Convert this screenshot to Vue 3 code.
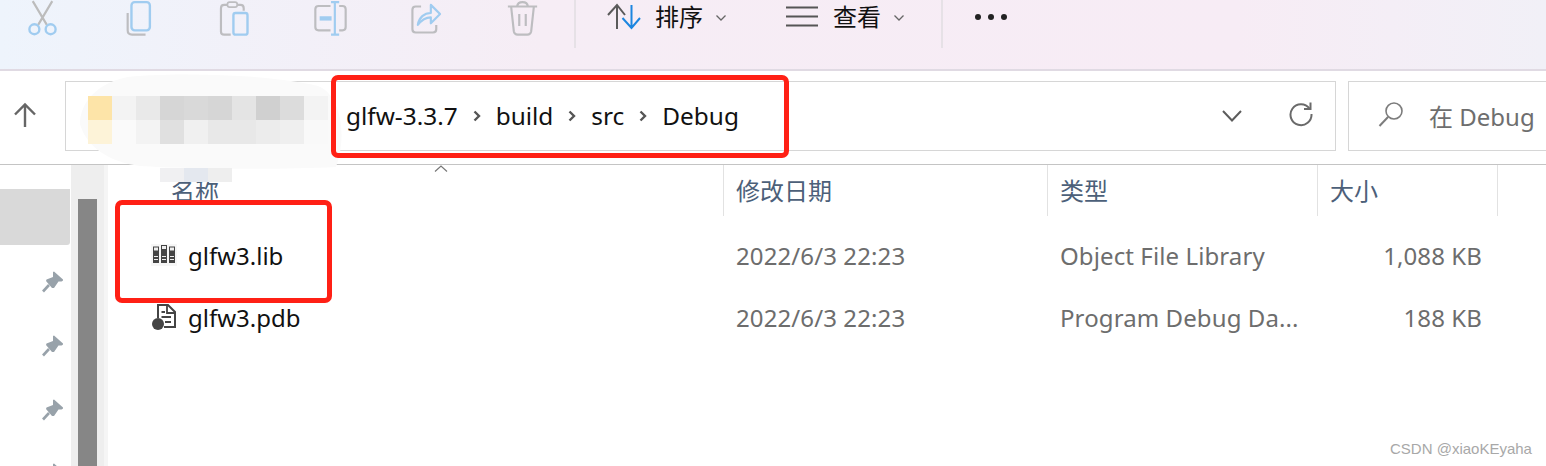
<template>
  <div class="window">
    <div class="toolbar">
      <button class="tool first" title="剪切">
        <svg width="39" height="39" viewBox="21 0 36 36" fill="none">
          <path d="M30 1L43 23M48 1L35 23" stroke="#bcbcbc" stroke-width="2" />
          <circle cx="31.5" cy="27" r="4.6" stroke="#a0ccf0" stroke-width="2.2" />
          <circle cx="46.5" cy="27" r="4.6" stroke="#a0ccf0" stroke-width="2.2" />
        </svg>
      </button>
      <button class="tool" title="复制">
        <svg width="39" height="39" viewBox="110.5 0 36 36" fill="none">
          <path d="M118.5 12V28Q118.5 32 122.5 32H135" stroke="#bdbdc0" stroke-width="2" />
          <rect x="122" y="2" width="17" height="26" rx="3" stroke="#a0ccf0" stroke-width="2.2" />
        </svg>
      </button>
      <button class="tool" title="粘贴">
        <svg width="39" height="39" viewBox="200.5 0 36 36" fill="none">
          <path d="M212 4.500H209Q206 4.500 206 7.500V29Q206 32 209 32H215M221 4.500H224Q227 4.500 227 7.500V10" stroke="#bdbdc0" stroke-width="2" />
          <rect x="212" y="2" width="9" height="4.500" rx="2" stroke="#bdbdc0" stroke-width="1.600" />
          <rect x="217.500" y="12" width="13" height="20" rx="2" stroke="#a0ccf0" stroke-width="2.200" />
        </svg>
      </button>
      <button class="tool" title="重命名">
        <svg width="39" height="39" viewBox="290 0 36 36" fill="none">
          <path d="M308 5.500H297Q294 5.500 294 8.500V25Q294 28 297 28H308M316 5.500H319Q322 5.500 322 8.500V25Q322 28 319 28H316" stroke="#bdbdc0" stroke-width="2" />
          <path d="M298 17H309" stroke="#a0ccf0" stroke-width="4" />
          <path d="M312 2V32M308.500 2H316M308.500 32H316" stroke="#a0ccf0" stroke-width="2" />
        </svg>
      </button>
      <button class="tool" title="共享">
        <svg width="39" height="39" viewBox="381 0 36 36" fill="none">
          <path d="M394 6H389Q386 6 386 9V27Q386 30 389 30H405Q408 30 408 27V23" stroke="#bdbdc0" stroke-width="2" />
          <path d="M391 23C392 16 397 12 403 12V4.500L411.500 13L403 21.500V16C398 16 394 19 391 23Z" stroke="#a0ccf0" stroke-width="2" stroke-linejoin="round" />
        </svg>
      </button>
      <button class="tool" title="删除">
        <svg width="39" height="39" viewBox="469.500 0 36 36" fill="none" stroke="#bdbdc0" stroke-width="2">
          <path d="M474 6H501M482.500 6Q483 2 487.500 2Q492 2 492.500 6M477 6L479.500 29Q480 32 483 32H492Q495 32 495.500 29L498 6" />
          <path d="M484.500 13V24M490.500 13V24" />
        </svg>
      </button>

      <div class="divider sep-a"></div>

      <button class="tool-text sort">
        <svg width="34" height="34" viewBox="607 0 34 34" fill="none" stroke-width="2">
          <path d="M608 15L617 5L625 15M617 5V29" stroke="#5a5a5a" />
          <path d="M622.500 18L631.500 28L640 18M631.500 5V28" stroke="#1c86e0" />
        </svg>
        <span class="tool-label">排序</span>
        <svg class="caret" width="10" height="6" viewBox="0 0 10 6" fill="none">
          <path d="M.5.500L5 5L9.500.500" stroke="#666" stroke-width="1.300" />
        </svg>
      </button>
      <button class="tool-text view">
        <svg width="34" height="34" viewBox="785 0 34 34" fill="none" stroke="#555" stroke-width="2">
          <path d="M786 7.500H818M786 16.500H818M786 25.500H818" />
        </svg>
        <span class="tool-label">查看</span>
        <svg class="caret" width="10" height="6" viewBox="0 0 10 6" fill="none">
          <path d="M.5.500L5 5L9.500.500" stroke="#666" stroke-width="1.300" />
        </svg>
      </button>

      <div class="divider sep-b"></div>

      <svg class="more" width="34" height="8" viewBox="0 0 34 8" fill="#222">
        <circle cx="4" cy="4" r="3" />
        <circle cx="17" cy="4" r="3" />
        <circle cx="30" cy="4" r="3" />
      </svg>
    </div>

    <div class="addressbar">
      <div class="up">
        <svg width="26" height="28" viewBox="0 0 26 28" fill="none" stroke="#666" stroke-width="2.400">
          <path d="M3 12.500L13 2.500L23 12.500M13 2.500V25" />
        </svg>
      </div>
      <div class="address">
        <div class="crumbs">
          <template v-for="(c, i) in crumbs" :key="c">
            <svg v-if="i > 0" class="crumb-sep" width="8" height="12" viewBox="0 0 8 12" fill="none">
              <path d="M1.500 1.500L6 6L1.500 10.500" stroke="#555" stroke-width="2.400" />
            </svg>
            <span class="crumb">{{ c }}</span>
          </template>
        </div>
        <svg class="addr-down" width="20" height="12" viewBox="0 0 20 12" fill="none">
          <path d="M1 1L10 10.500L19 1" stroke="#5c5c5c" stroke-width="2" />
        </svg>
        <svg class="refresh" width="26" height="26" viewBox="0 0 26 26" fill="none" stroke="#6a6a6a" stroke-width="2">
          <path d="M21.500 7.500A10.500 10.500 0 1 0 23.500 13" />
          <path d="M22.500 1.500V8H16" />
        </svg>
      </div>
      <div class="search">
        <svg width="28" height="28" viewBox="0 0 28 28" fill="none" stroke="#7c7c7c">
          <circle cx="17" cy="10" r="8" stroke-width="1.600" />
          <path d="M11 16L2.500 25" stroke-width="2" />
        </svg>
        <span class="search-text">在 Debug</span>
        <span class="search-rest">中搜索</span>
      </div>
    </div>

    <div class="body">
      <div class="sidebar">
        <div class="nav">
          <div class="nav-active"></div>
          <div v-for="n in 4" :key="n" class="nav-pin">
            <svg width="22" height="22" viewBox="0 0 22 22" fill="#98a2aa">
              <path d="M12 .5L21 8.500Q21.500 10 19.500 10.500H16.500L12 17H10L4 10L4.500 8.500L11 6V1Z" />
              <path d="M7 14L1 20.500" stroke="#98a2aa" stroke-width="2.600" />
            </svg>
          </div>
        </div>
        <div class="track"><div class="thumb"></div></div>
      </div>

      <div class="list">
        <div class="head">
          <div class="head-cell name-head">名称
            <svg class="sort-caret" width="14" height="7" viewBox="0 0 14 7" fill="none">
              <path d="M1 6.500L7 1L13 6.500" stroke="#777" stroke-width="1.200" />
            </svg>
          </div>
          <div class="head-cell">修改日期</div>
          <div class="head-cell">类型</div>
          <div class="head-cell">大小</div>
        </div>

        <div v-for="f in files" :key="f.name" class="row">
          <div class="file-name">
            <span class="file-icon">
              <svg v-if="f.icon === 'lib'" width="26" height="22" viewBox="0 0 26 22">
                <rect width="26" height="22" fill="#f6f6f6" />
                <path fill="#444" d="M2 2.500H8V19H2ZM10 1H16V19H10ZM18 2.500H24V19H18Z" />
                <path fill="#eee" d="M3 3.500H7V6.500H3ZM11 2H15V5H11ZM19 3.500H23V6.500H19ZM3 12H7V13H3ZM3 15H7V16H3ZM11 12H15V13H11ZM11 15H15V16H11ZM19 12H23V13H19ZM19 15H23V16H19Z" />
              </svg>
              <svg v-else width="26" height="28" viewBox="0 0 26 28" fill="none">
                <path d="M7 15V2H17L24 9V24H13" stroke="#444" stroke-width="2" />
                <path d="M16 2V10H24M10.500 9H14M10.500 14H20M14 19H20" stroke="#444" stroke-width="1.800" />
                <circle cx="7" cy="21" r="6" fill="#444" />
              </svg>
            </span>
            <span>{{ f.name }}</span>
          </div>
          <div class="cell">{{ f.date }}</div>
          <div class="cell">{{ f.type }}</div>
          <div class="cell size">{{ f.size }}</div>
        </div>
      </div>
    </div>

    <!-- 打码和红框是盖在截图上的标注 -->
    <svg class="smudge" width="270" height="96" viewBox="0 0 270 96">
      <path d="M2 50C2 25 25 4 60 2C120 -2 200 2 240 12C262 20 270 60 258 93C200 96 110 95 62 92C30 88 8 72 2 50Z" fill="#fafafa" />
    </svg>
    <div class="mosaic">
      <div v-for="(t, i) in tiles" :key="i" class="tile" :style="{ background: t }"></div>
    </div>
    <div class="mosaic-low">
      <div v-for="t in lowTiles" :key="t" class="tile-low" :style="{ background: t }"></div>
    </div>
    <div class="mark mark-path"></div>
    <div class="mark mark-file"></div>
    <div class="watermark">CSDN @xiaoKEyaha</div>
  </div>
</template>

<script setup>
const crumbs = ['glfw-3.3.7', 'build', 'src', 'Debug']

const files = [
  { name: 'glfw3.lib', icon: 'lib', date: '2022/6/3 22:23', type: 'Object File Library', size: '1,088 KB' },
  { name: 'glfw3.pdb', icon: 'pdb', date: '2022/6/3 22:23', type: 'Program Debug Da...', size: '188 KB' }
]

const tiles = [
  '#fde4a8', '#f3f3f3', '#e9e9e9', '#d6d6d6', '#d9d9d9', '#d6d6d6', '#e4e4e4', '#d0d0d0', '#dcdcdc', '#f3f3f3',
  '#fdf3d8', '#fafafa', '#f3f3f3', '#e0e0e0', '#f0f0f0', '#e8e8e8', '#e8e8e8', '#ececec', '#efefef', '#f9f9f9'
]
const lowTiles = ['#f0f0f2', '#e4e8ef', '#eeeeee']
</script>

<style>
html, body {
  margin: 0;
  background: #fff;
}
</style>

<style scoped>
.window {
  position: relative;
  width: 1546px;
  height: 466px;
  overflow: hidden;
  background: #fff;
  font-family: "Noto Sans", "Noto Sans CJK SC", sans-serif;
  color: #111;
}

button {
  padding: 0;
  border: 0;
  background: none;
  font: inherit;
  color: inherit;
}

.toolbar {
  display: flex;
  align-items: flex-start;
  height: 69px;
  border-bottom: 2px solid #e0dae3;
  background: linear-gradient(90deg, #eef4fc 0%, #f6edf5 35%, #f7ecf5 80%, #f1f0f7 100%);
}

.tool {
  flex: none;
  display: flex;
  justify-content: center;
  width: 96px;
  height: 39px;
}

.tool.first {
  width: 84px;
  margin-right: 6px;
}

.divider {
  flex: none;
  width: 2px;
  height: 48px;
  background: #e6e1e6;
}

.sep-a {
  margin-left: 4px;
}

.tool-text {
  flex: none;
  display: flex;
  align-items: flex-start;
  height: 36px;
}

.sort {
  margin-left: 31px;
}

.view {
  margin-left: 59px;
}

.tool-label {
  margin-left: 14px;
  font-size: 24px;
  line-height: 34px;
}

.caret {
  margin: 15px 0 0 13px;
}

.sep-b {
  margin-left: 37px;
}

.more {
  margin: 13px 0 0 31px;
}

.addressbar {
  display: flex;
  height: 93px;
  border-bottom: 1px solid #c4c4c4;
}

.up {
  flex: none;
  width: 65px;
  height: 70px;
  margin-top: 10px;
  display: flex;
  align-items: center;
  padding-left: 12px;
  box-sizing: border-box;
}

.address {
  flex: none;
  display: flex;
  align-items: center;
  box-sizing: border-box;
  width: 1271px;
  height: 70px;
  margin-top: 10px;
  padding-left: 280px;
  border: 1.500px solid #d6d6d6;
}

.crumbs {
  display: flex;
  align-items: center;
  flex: 1;
  font-size: 24.4px;
  margin-top: -1px;
}

.crumb-sep {
  margin: 1px 15px 0;
}

.addr-down {
  margin-right: 46px;
}

.refresh {
  margin-right: 21px;
  margin-top: -4px;
}

.search {
  flex: none;
  display: flex;
  align-items: center;
  box-sizing: border-box;
  width: 400px;
  height: 70px;
  margin: 10px 0 0 12px;
  padding: 0 0 2px 28px;
  border: 1.500px solid #d6d6d6;
  color: #6e6e6e;
  font-size: 24px;
  white-space: nowrap;
}

.search-text {
  margin-left: 24px;
}

.search-rest {
  margin-left: 10px;
}

.body {
  display: flex;
  height: 301px;
}

.sidebar {
  flex: none;
  display: flex;
  width: 108px;
  border-right: 4px solid #f5f5f5;
  box-sizing: border-box;
}

.nav {
  flex: none;
  width: 71px;
  padding-top: 24px;
}

.nav-active {
  width: 70px;
  height: 56px;
  margin-bottom: 5px;
  background: #d9d9d9;
  border-radius: 0 0 3px 0;
}

.nav-pin {
  display: flex;
  justify-content: flex-end;
  align-items: center;
  height: 64px;
  padding-right: 7px;
}

.track {
  flex: none;
  width: 33px;
  padding: 34px 0 0 7px;
  box-sizing: border-box;
  background: #eeeeee;
}

.thumb {
  width: 19px;
  height: 100%;
  background: #868686;
}

.list {
  flex: 1;
}

.head {
  display: grid;
  grid-template-columns: 616px 324px 270px 180px;
  height: 51px;
  margin-bottom: 8px;
}

.head-cell {
  position: relative;
  display: flex;
  align-items: center;
  box-sizing: border-box;
  padding: 0 0 3px 12px;
  border-right: 1.500px solid #e2e2e2;
  color: #4c6079;
  font-size: 24px;
}

.name-head {
  padding-left: 63px;
}

.sort-caret {
  position: absolute;
  left: 326px;
  top: 0;
}

.row {
  display: grid;
  grid-template-columns: 615px 324px 270px 165px;
  align-items: center;
  height: 62px;
  font-size: 24px;
}

.file-name {
  display: flex;
  align-items: center;
  padding-left: 41px;
}

.file-icon {
  display: flex;
  justify-content: center;
  width: 30px;
  margin-right: 9px;
}

.cell {
  padding-left: 13px;
  color: #6d6d6d;
  letter-spacing: 0.1px;
}

.size {
  text-align: right;
}

.smudge {
  position: absolute;
  left: 78px;
  top: 74px;
}

.mosaic {
  position: absolute;
  left: 88px;
  top: 96px;
  display: grid;
  grid-template-columns: repeat(10, 24px);
  grid-auto-rows: 24px;
}

.mosaic-low {
  position: absolute;
  left: 160px;
  top: 168px;
  display: flex;
}

.tile-low {
  width: 24px;
  height: 14px;
}

.mark {
  position: absolute;
  box-sizing: border-box;
  border: 5px solid #ff2015;
  border-radius: 7px;
}

.mark-path {
  left: 331px;
  top: 75px;
  width: 458px;
  height: 83px;
}

.mark-file {
  left: 115px;
  top: 200px;
  width: 217px;
  height: 103px;
}

.watermark {
  position: absolute;
  left: 1390px;
  top: 440px;
  font-family: "Liberation Sans", sans-serif;
  font-size: 15px;
  color: #a8a8a8;
}
</style>
